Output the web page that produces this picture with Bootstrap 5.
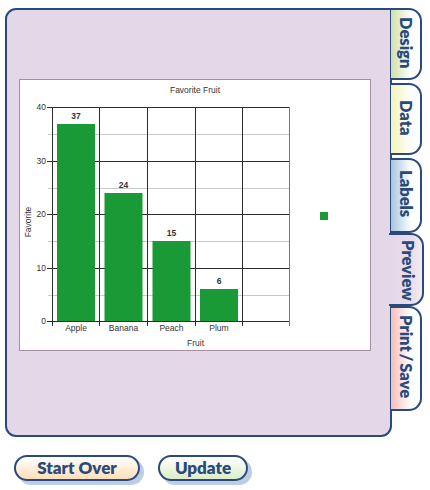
<!DOCTYPE html>
<html lang="en">
<head>
<meta charset="utf-8">
<title>Favorite Fruit</title>
<link href="https://cdn.jsdelivr.net/npm/bootstrap@5.3.0/dist/css/bootstrap.min.css" rel="stylesheet">
<style>
html,body{margin:0;background:#fff;}
.stage{width:430px;height:490px;padding:8px 0 0 5px;overflow:hidden;}
.workarea{height:429px;}
.sheet{width:387px;height:429px;background:#e4d7e7;border:2px solid #2a4a7c;border-radius:11px 0 11px 11px;padding:69px 0 0 12px;}
.plotcard{display:block;box-sizing:content-box;width:350px;height:270px;background:#fff;border:1px solid #a48fa6;}
.plotcard text{font-family:"Liberation Sans",Arial,sans-serif;fill:#333;}
.tabcol{margin-left:-1px;}
.tabitem{writing-mode:vertical-rl;font-family:Lato,"Open Sans",sans-serif;font-weight:800;color:#2a4a7c;font-size:16.5px;line-height:1;display:flex;align-items:center;justify-content:center;width:31px;border:2px solid #2a4a7c;border-left:0;border-radius:0 13px 13px 0;margin-bottom:3px;padding-bottom:3px;word-spacing:-2px;}
.tab-design{height:72px;background:linear-gradient(90deg,#cfe0a8,#fff 70%);}
.tab-data{height:72px;background:linear-gradient(90deg,#f3f3b8,#fff 70%);}
.tab-labels{height:75px;background:linear-gradient(90deg,#a6c6dc,#fff 70%);margin-bottom:0;}
.tab-preview{height:73px;width:35px;background:linear-gradient(90deg,#e4d7e7,#e9deeb 70%,#f2ecf3);margin-bottom:0;margin-left:-2px;padding:2px 0 0 4px;position:relative;}
.tab-print{height:105px;background:linear-gradient(90deg,#f5bdb8,#fff 70%);}
.actionrow{margin:18px 0 0 9px;gap:18px;}
.pillbtn{height:26px;padding:0 0 2px;border:2px solid #2a4a7c;border-radius:13px;box-shadow:4px 4px 0 #bccde4;font-family:Lato,"Open Sans",sans-serif;font-weight:800;font-size:17px;line-height:1;color:#2a4a7c;}
.pillbtn:hover{color:#2a4a7c;border-color:#2a4a7c;}
.pill-start{width:126px;background:linear-gradient(180deg,#fff,#fddfb8);}
.pill-update{width:90px;background:linear-gradient(180deg,#fff,#dcedc6);}
</style>
</head>
<body>
<div class="stage">
  <div class="workarea d-flex align-items-start">
    <div class="sheet">
      <svg class="plotcard" viewBox="0 0 350 270" role="img" aria-label="Favorite Fruit bar chart">
        <g transform="translate(-20,-80)">
          <path d="M48 134.500H290M48 188.500H290M48 241.500H290M48 295.500H290" fill="none" stroke="#c8c8c8"/>
          <g stroke="#2c2c2c" stroke-width="1" fill="none">
            <path d="M47 107.500H290M47 161.500H290M47 214.500H290M47 268.500H290M47 321.500H290"/>
            <path d="M52.500 107V326M99.500 107V326M147.500 107V326M195.500 107V326M242.500 107V326"/>
          </g>
          <path d="M289.500 107V326" stroke="#777" fill="none"/>
          <g fill="#1a9a36">
            <rect x="57" y="124" width="38" height="197"/>
            <rect x="104.500" y="193" width="38" height="128"/>
            <rect x="152.500" y="241" width="38" height="80"/>
            <rect x="200" y="289" width="38" height="32"/>
            <rect x="320" y="212" width="8" height="8"/>
          </g>
          <g font-size="8.500" font-weight="700" text-anchor="middle">
            <text x="76" y="119">37</text>
            <text x="123.500" y="188">24</text>
            <text x="171.500" y="236">15</text>
            <text x="219" y="284">6</text>
          </g>
          <g font-size="8.500" text-anchor="end">
            <text x="46" y="110">40</text>
            <text x="46" y="164">30</text>
            <text x="46" y="217">20</text>
            <text x="46" y="271">10</text>
            <text x="46" y="324">0</text>
          </g>
          <g font-size="8.500" text-anchor="middle">
            <text x="76" y="331">Apple</text>
            <text x="123.500" y="331">Banana</text>
            <text x="171.500" y="331">Peach</text>
            <text x="219" y="331">Plum</text>
            <text x="195" y="93">Favorite Fruit</text>
            <text x="195.500" y="346">Fruit</text>
            <text transform="translate(31,222) rotate(-90)">Favorite</text>
          </g>
        </g>
      </svg>
    </div>
    <div class="tabcol d-flex flex-column">
      <div class="tabitem tab-design">Design</div>
      <div class="tabitem tab-data">Data</div>
      <div class="tabitem tab-labels">Labels</div>
      <div class="tabitem tab-preview">Preview</div>
      <div class="tabitem tab-print">Print / Save</div>
    </div>
  </div>
  <div class="actionrow d-flex">
    <button type="button" class="btn pillbtn pill-start">Start Over</button>
    <button type="button" class="btn pillbtn pill-update">Update</button>
  </div>
</div>
<script src="https://cdn.jsdelivr.net/npm/bootstrap@5.3.0/dist/js/bootstrap.bundle.min.js"></script>
</body>
</html>
